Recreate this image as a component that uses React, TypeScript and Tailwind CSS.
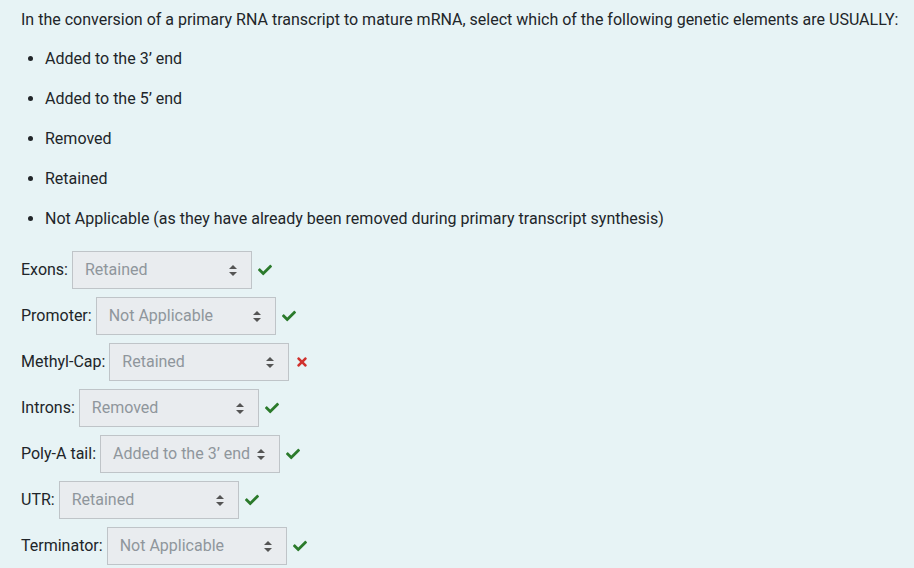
import React from "react";
import { FaCheck, FaTimes } from "react-icons/fa";

const options = [
  "Added to the 3\u2019 end",
  "Added to the 5\u2019 end",
  "Removed",
  "Retained",
  "Not Applicable (as they have already been removed during primary transcript synthesis)",
];

interface Answer {
  label: string;
  value: string;
  correct: boolean;
}

const answers: Answer[] = [
  { label: "Exons:", value: "Retained", correct: true },
  { label: "Promoter:", value: "Not Applicable", correct: true },
  { label: "Methyl-Cap:", value: "Retained", correct: false },
  { label: "Introns:", value: "Removed", correct: true },
  { label: "Poly-A tail:", value: "Added to the 3\u2019 end", correct: true },
  { label: "UTR:", value: "Retained", correct: true },
  { label: "Terminator:", value: "Not Applicable", correct: true },
];

function Arrows() {
  return (
    <svg width="8" height="11" viewBox="0 0 8 11" className="shrink-0">
      <path d="M4 0 L8 4 L0 4 Z" fill="#555" />
      <path d="M4 11 L8 7 L0 7 Z" fill="#555" />
    </svg>
  );
}

function AnswerRow({ answer }: { answer: Answer }) {
  return (
    <div className="flex items-center h-[38px]">
      <span className="text-[#212529] mr-1">{answer.label}</span>
      <div className="flex items-center justify-between w-[180px] h-[38px] pl-3 pr-[14px] bg-[#e9ecef] border border-[#bfc4c8] text-[#8f969c]">
        <span className="whitespace-nowrap">{answer.value}</span>
        <Arrows />
      </div>
      <span className="ml-[6px]">
        {answer.correct ? (
          <FaCheck className="text-[#2b7a2b]" size={14} />
        ) : (
          <FaTimes className="text-[#d0312d]" size={14} />
        )}
      </span>
    </div>
  );
}

export default function App() {
  return (
    <div
      className="w-[914px] h-[568px] overflow-hidden bg-[#e7f3f5] text-[16px] leading-6 text-[#212529] pl-[21px] pr-2 pt-2"
      style={{ fontFamily: "Roboto, 'Liberation Sans', sans-serif" }}
    >
      <p className="whitespace-nowrap">
        In the conversion of a primary RNA transcript to mature mRNA, select which of the following genetic elements are USUALLY:
      </p>
      <ul className="list-disc pl-6 mt-[15px] space-y-4 marker:text-[#212529]">
        {options.map((o) => (
          <li key={o}>{o}</li>
        ))}
      </ul>
      <div className="mt-[20px] flex flex-col gap-2">
        {answers.map((a) => (
          <AnswerRow key={a.label} answer={a} />
        ))}
      </div>
    </div>
  );
}
